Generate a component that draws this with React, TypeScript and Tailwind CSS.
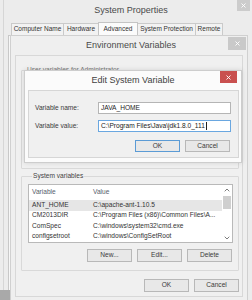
import React from "react";

const CloseX = ({ size = 6 }: { size?: number }) => (
  <svg width={size} height={size} viewBox="0 0 6 6">
    <path d="M0.6 0.6L5.4 5.4M5.4 0.6L0.6 5.4" stroke="white" strokeWidth="1.1" />
  </svg>
);

const Chevron = ({ up }: { up?: boolean }) => (
  <svg width="6" height="4" viewBox="0 0 6 4">
    <path
      d={up ? "M0.7 3.3L3 1L5.3 3.3" : "M0.7 0.7L3 3L5.3 0.7"}
      stroke="#7c7c7c"
      strokeWidth="1"
      fill="none"
    />
  </svg>
);

const rows = [
  { n: "ANT_HOME", v: "C:\\apache-ant-1.10.5", sel: true },
  { n: "CM2013DIR", v: "C:\\Program Files (x86)\\Common Files\\A..." },
  { n: "ComSpec", v: "C:\\windows\\system32\\cmd.exe" },
  { n: "configsetroot", v: "C:\\windows\\ConfigSetRoot" },
];

const tabs = [
  { t: "Computer Name", w: "w-[53px]" },
  { t: "Hardware", w: "w-[36px]" },
  { t: "Advanced", w: "w-[40px]", active: true },
  { t: "System Protection", w: "w-[59px]" },
  { t: "Remote", w: "w-[28px]" },
];

function Btn({ label, def, w = "w-[45px]", h = "h-[13px]" }: { label: string; def?: boolean; w?: string; h?: string }) {
  return (
    <div
      className={`${w} ${h} flex items-center justify-center border bg-[#e8e8e8] text-[6.6px] leading-none text-[#3a3a3a] ${
        def ? "border-[#5b9bd5]" : "border-[#b8b8b8]"
      }`}
    >
      {label}
    </div>
  );
}

export default function App() {
  return (
    <div className="relative w-[252px] h-[300px] overflow-hidden bg-[#ececec] font-['Liberation_Sans',Arial,sans-serif] text-[#3a3a3a]">
      {/* System Properties window */}
      <div className="flex flex-col h-full pl-[3px] pr-[2px]">
        <div className="h-[22px] flex items-start border-l border-[#d6d6d6]">
          <div className="flex-1 h-[20px] flex items-center justify-center pl-[21px]">
            <span className="text-[9px] leading-none text-[#4a4a4a]">System Properties</span>
          </div>
          <div className="w-[13px] h-[11px] bg-[#cccccc] flex items-center justify-center">
            <CloseX size={5} />
          </div>
        </div>
        <div className="flex items-end h-[13px] pl-[7px] border-l border-[#d6d6d6]">
          {tabs.map((t) => (
            <div
              key={t.t}
              className={`${t.w} -ml-px first:ml-0 flex items-center justify-center border border-b-0 text-[6.5px] leading-none text-[#333] ${
                t.active
                  ? "h-[13px] bg-[#fbfbfb] border-[#c4c4c4] relative z-10"
                  : "h-[12px] bg-[#f2f2f2] border-[#cacaca]"
              }`}
            >
              {t.t}
            </div>
          ))}
        </div>
        <div className="flex-1 flex border-l border-[#d6d6d6]">
          <div className="flex-1 ml-[4px] mr-[4px] border border-[#c8c8c8] bg-[#f7f7f7]" />
        </div>
      </div>

      {/* Environment Variables window */}
      <div className="absolute left-[10px] top-[35px] w-[238px] h-[268px] flex flex-col bg-[#efefef] border border-[#d0d0d0]">
        <div className="h-[19px] flex items-start">
          <div className="flex-1 h-[19px] flex items-center justify-center pl-[23px]">
            <span className="text-[9px] leading-none text-[#4a4a4a]">Environment Variables</span>
          </div>
          <div className="mt-[1px] mr-[1px] w-[18px] h-[13px] bg-[#c9c9c9] flex items-center justify-center">
            <CloseX size={5} />
          </div>
        </div>
        <div className="flex-1 mx-[4px] mb-[5px] flex flex-col border border-[#d8d8d8] bg-[#f0f0f0]">
          <fieldset className="mt-[10px] ml-[5px] mr-[3px] h-[103px] border border-[#d9d9d9] rounded-[1px]">
            <legend className="ml-[4px] px-[1px] text-[6.6px] leading-[8px] text-[#777]">
              User variables for Administrator
            </legend>
          </fieldset>
          <fieldset className="mt-[3px] ml-[5px] mr-[3px] h-[99px] border border-[#d9d9d9] rounded-[1px] pl-[6px] pr-[5px] flex flex-col">
            <legend className="ml-[4px] px-[1px] text-[6.6px] leading-[8px] text-[#444]">
              System variables
            </legend>
            <div className="mt-[4px] h-[59px] flex border border-[#b9b9b9] bg-white">
              <div className="flex-1 flex flex-col">
                <div className="h-[15px] flex items-center text-[6.6px] leading-none text-[#55606c]">
                  <div className="w-[64px] pl-[3px]">Variable</div>
                  <div>Value</div>
                </div>
                {rows.map((r) => (
                  <div
                    key={r.n}
                    className={`h-[10.5px] flex items-center text-[6.6px] leading-none text-[#333] whitespace-nowrap ${
                      r.sel ? "bg-[#e6e6e6]" : ""
                    }`}
                  >
                    <div className="w-[64px] pl-[3px]">{r.n}</div>
                    <div>{r.v}</div>
                  </div>
                ))}
              </div>
              <div className="w-[10px] flex flex-col items-center pt-[3px] pb-[2px]">
                <Chevron up />
                <div className="mt-[4px] w-[8px] h-[13px] bg-[#cfcfcf]" />
                <div className="flex-1" />
                <Chevron />
              </div>
            </div>
            <div className="mt-[6px] mr-[1px] flex justify-end gap-[5px]">
              <Btn label="New..." />
              <Btn label="Edit..." />
              <Btn label="Delete" />
            </div>
          </fieldset>
          <div className="mt-[8px] mr-[3px] flex justify-end gap-[5px]">
            <Btn label="OK" />
            <Btn label="Cancel" />
          </div>
        </div>
      </div>

      {/* Edit System Variable dialog */}
      <div className="absolute left-[24px] top-[70px] w-[218px] h-[93px] flex flex-col bg-[#fbfbfb] border border-[#cdcdcd] shadow-[0_0_5px_rgba(0,0,0,0.12)]">
        <div className="h-[19px] flex items-start">
          <div className="flex-1 h-[19px] flex items-center justify-center pl-[21px]">
            <span className="text-[9px] leading-none text-[#3f3f3f]">Edit System Variable</span>
          </div>
          <div className="mr-[4px] w-[17px] h-[12px] bg-[#c9504f] flex items-center justify-center">
            <CloseX size={5} />
          </div>
        </div>
        <div className="h-[68px] ml-[3px] mr-[2px] border border-[#d6d6d6] bg-[#f0f0f0] flex flex-col">
          <div className="mt-[11px] flex items-center">
            <div className="w-[69px] pl-[6px] text-[6.6px] leading-none text-[#3a3a3a]">Variable name:</div>
            <div className="w-[133px] h-[12px] flex items-center pl-[2px] border border-[#b5b5b5] bg-white text-[6.6px] leading-none text-[#222]">
              JAVA_HOME
            </div>
          </div>
          <div className="mt-[6px] flex items-center">
            <div className="w-[69px] pl-[6px] text-[6.6px] leading-none text-[#3a3a3a]">Variable value:</div>
            <div className="w-[133px] h-[12px] flex items-center pl-[2px] border border-[#6aa7e0] bg-white text-[6.6px] leading-none text-[#222] whitespace-nowrap">
              <span>C:\Program Files\Java\jdk1.8.0_111</span>
              <span className="ml-[1px] w-px h-[8px] bg-[#222]" />
            </div>
          </div>
          <div className="mt-[8px] pr-[8px] flex justify-end gap-[5px]">
            <Btn label="OK" def h="h-[12px]" />
            <Btn label="Cancel" h="h-[12px]" />
          </div>
        </div>
      </div>

      <div className="absolute left-0 bottom-0 w-[10px] h-[10px] bg-[#a9a9a9]" />
    </div>
  );
}
